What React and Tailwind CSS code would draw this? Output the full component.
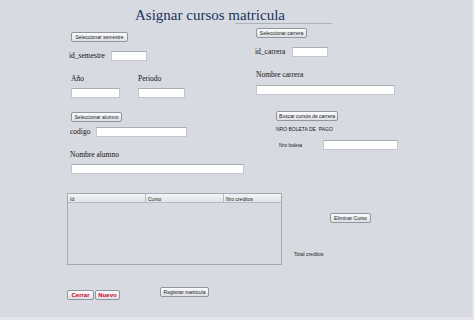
const serif = { fontFamily: '"Liberation Serif", "DejaVu Serif", serif' };

const Btn = ({ children, className = "", red = false }) => (
  <button
    className={`h-[10px] flex items-center justify-center rounded-[2px] border border-[#9096a0] bg-gradient-to-b from-[#fbfbfc] to-[#dde0e5] text-[5px] leading-none font-['Liberation_Sans',sans-serif] ${
      red ? "text-[#d0021b] font-bold text-[6px]" : "text-[#222]"
    } ${className}`}
  >
    {children}
  </button>
);

const Input = ({ className = "" }) => (
  <div
    className={`h-[10px] bg-white border border-[#c3c6cc] border-t-[#a9adb4] ${className}`}
  />
);

const Label = ({ children, className = "" }) => (
  <span
    className={`text-[7.5px] leading-[10px] text-[#111] whitespace-nowrap ${className}`}
    style={serif}
  >
    {children}
  </span>
);

const Small = ({ children, className = "" }) => (
  <span
    className={`text-[5px] leading-[10px] text-[#222] whitespace-nowrap font-['Liberation_Sans',sans-serif] ${className}`}
  >
    {children}
  </span>
);

export default function App() {
  return (
    <div className="w-[474px] h-[320px] bg-[#d7dae0] border-r-2 border-[#e4e6ea] flex flex-col overflow-hidden">
      {/* title */}
      <div className="pt-[7px] pl-[135px] h-[25px]">
        <h1
          className="text-[15px] leading-[17px] text-[#1b325e] whitespace-nowrap"
          style={serif}
        >
          Asignar cursos matricula
        </h1>
        <div className="ml-[100px] -mt-[1px] h-px w-[97px] bg-[#aeb3bb]" />
      </div>

      {/* two columns */}
      <div className="flex items-start">
        {/* left */}
        <div className="ml-[67px] w-[188px] shrink-0 flex flex-col">
          <Btn className="mt-[7px] ml-[4px] w-[57px]">Seleccionar semestre</Btn>
          <div className="mt-[9px] flex items-center">
            <Label className="ml-[2px] w-[42px] shrink-0">id_semestre</Label>
            <Input className="w-[36px]" />
          </div>
          <div className="mt-[13px] flex">
            <Label className="ml-[4px] w-[67px] shrink-0">Año</Label>
            <Label>Periodo</Label>
          </div>
          <div className="mt-[4px] flex">
            <Input className="ml-[4px] w-[49px]" />
            <Input className="ml-[18px] w-[47px]" />
          </div>
          <Btn className="mt-[14px] ml-[4px] w-[51px]">Seleccionar alumno</Btn>
          <div className="mt-[5px] flex items-center">
            <Label className="ml-[3px] w-[26px] shrink-0">codigo</Label>
            <Input className="w-[91px]" />
          </div>
          <Label className="mt-[13px] ml-[3px]">Nombre alumno</Label>
          <Input className="mt-[4px] ml-[4px] w-[173px]" />
        </div>

        {/* right */}
        <div className="flex flex-col">
          <Btn className="mt-[3px] ml-[1px] w-[51px]">Seleccionar carrera</Btn>
          <div className="mt-[9px] flex items-center">
            <Label className="w-[37px] shrink-0">id_carrera</Label>
            <Input className="w-[36px]" />
          </div>
          <Label className="mt-[13px] ml-[1px]">Nombre carrera</Label>
          <Input className="mt-[5px] ml-[1px] w-[139px]" />
          <Btn className="mt-[16px] ml-[21px] w-[62px]">Buscar cursos de carrera</Btn>
          <Small className="mt-[3px] ml-[21px]">NRO BOLETA DE&nbsp; PAGO</Small>
          <div className="mt-[6px] flex items-center">
            <Small className="ml-[24px] w-[44px] shrink-0">Nro boleta</Small>
            <Input className="w-[75px]" />
          </div>
        </div>
      </div>

      {/* table area */}
      <div className="mt-[19px] flex items-start">
        <div className="ml-[67px] w-[215px] h-[72px] border border-[#a5aab2] bg-[#d7dae0] flex flex-col">
          <div className="h-[9px] flex bg-gradient-to-b from-[#f3f4f6] to-[#e0e3e7] border-b border-[#b7bcc3]">
            <Small className="w-[78px] pl-[2px] leading-[9px] border-r border-[#b7bcc3]">Id</Small>
            <Small className="w-[78px] pl-[2px] leading-[9px] border-r border-[#b7bcc3]">Curso</Small>
            <Small className="flex-1 pl-[2px] leading-[9px]">Nro creditos</Small>
          </div>
        </div>
        <div className="ml-[12px] flex flex-col">
          <Btn className="mt-[20px] ml-[36px] w-[41px]">Eliminar Curso</Btn>
          <Small className="mt-[26px]">Total creditos</Small>
        </div>
      </div>

      {/* bottom buttons */}
      <div className="mt-[22px] flex items-start">
        <div className="mt-[3px] ml-[67px] flex gap-[1px]">
          <Btn red className="w-[27px]">Cerrar</Btn>
          <Btn red className="w-[25px]">Nuevo</Btn>
        </div>
        <Btn className="ml-[40px] w-[49px]">Registrar matricula</Btn>
      </div>

      <div className="flex-1" />
      <div className="h-[3px] bg-[#e4e6ea]" />
    </div>
  );
}
